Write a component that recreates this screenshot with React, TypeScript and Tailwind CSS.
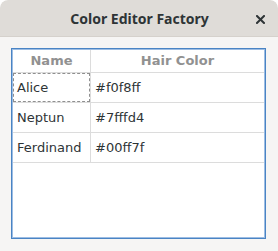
import React from "react";

const rows = [
  ["Alice", "#f0f8ff"],
  ["Neptun", "#7fffd4"],
  ["Ferdinand", "#00ff7f"],
];

export default function App() {
  return (
    <div
      className="w-[278px] h-[251px] bg-[#f6f5f4] flex flex-col overflow-hidden rounded-t-[8px]"
      style={{ fontFamily: '"DejaVu Sans", sans-serif' }}
    >
      <div className="h-[37px] shrink-0 bg-[#dfdcd8] rounded-t-[8px] border-b border-[#d5d1cc] flex items-center relative">
        <div
          className="flex-1 text-center text-[14px] font-bold text-[#2e3436] pl-[1px]"
          style={{ fontFamily: '"Noto Sans", sans-serif' }}
        >
          Color Editor Factory
        </div>
        <svg className="absolute left-[256px] top-[15px]" width="9" height="9" viewBox="0 0 9 9">
          <path d="M1 1 L8 8 M8 1 L1 8" stroke="#2e3436" strokeWidth="2" strokeLinecap="square" />
        </svg>
      </div>
      <div className="flex-1 pt-[11px] pl-[11px] pr-[12px] pb-[12px] flex">
        <div className="flex-1 border border-[#4a84c4] shadow-[inset_0_0_0_1px_#9dbde3] bg-white p-[1px] flex flex-col">
          <div className="grid grid-cols-[78px_1fr] h-[23px] border-b border-[#dcdcdc] text-[13px] font-bold text-[#919191]">
            <div className="flex items-center justify-center border-r border-[#dcdcdc]">Name</div>
            <div className="flex items-center justify-center">Hair Color</div>
          </div>
          {rows.map(([n, c], i) => (
            <div key={n} className="grid grid-cols-[78px_1fr] h-[30px] border-b border-[#dcdcdc] text-[13px] text-[#2e3436]">
              <div className="border-r border-[#dcdcdc] flex">
                <div className={"flex-1 flex items-center pl-[3px] " + (i === 0 ? "border border-dashed border-[#8f8f8f]" : "border border-transparent")}>{n}</div>
              </div>
              <div className="flex items-center pl-[4px]">{c}</div>
            </div>
          ))}
          <div className="flex-1" />
        </div>
      </div>
    </div>
  );
}
